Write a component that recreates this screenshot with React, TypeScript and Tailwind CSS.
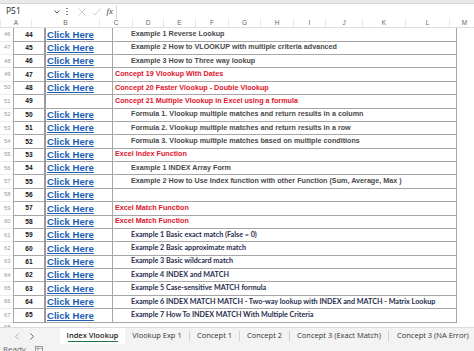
import React from "react";

type Row = { n: number; a: number; link: boolean; text: string; kind: "gray" | "red" | "navy" | "none" };

const rows: Row[] = [
  { n: 46, a: 44, link: true, text: "Example 1 Reverse Lookup", kind: "gray" },
  { n: 47, a: 45, link: true, text: "Example 2 How to VLOOKUP with multiple criteria advanced", kind: "gray" },
  { n: 48, a: 46, link: true, text: "Example 3 How to Three way lookup", kind: "gray" },
  { n: 49, a: 47, link: true, text: "Concept 19 Vlookup With Dates", kind: "red" },
  { n: 50, a: 48, link: true, text: "Concept 20 Faster Vlookup -  Double Vlookup", kind: "red" },
  { n: 51, a: 49, link: false, text: "Concept 21 Multiple Vlookup in Excel using a formula", kind: "red" },
  { n: 52, a: 50, link: true, text: "Formula 1. Vlookup multiple matches and return results in a column", kind: "gray" },
  { n: 53, a: 51, link: true, text: "Formula 2. Vlookup multiple matches and return results in a row", kind: "gray" },
  { n: 54, a: 52, link: true, text: "Formula 3. Vlookup multiple matches based on multiple conditions", kind: "gray" },
  { n: 55, a: 53, link: true, text: "Excel Index Function", kind: "red" },
  { n: 56, a: 54, link: true, text: "Example 1 INDEX Array Form", kind: "gray" },
  { n: 57, a: 55, link: true, text: "Example 2 How to Use Index function with other Function (Sum, Average, Max )", kind: "gray" },
  { n: 58, a: 56, link: true, text: "", kind: "none" },
  { n: 59, a: 57, link: true, text: "Excel Match Function", kind: "red" },
  { n: 60, a: 58, link: true, text: "Excel Match Function", kind: "red" },
  { n: 61, a: 59, link: true, text: "Example 1 Basic exact match (False = 0)", kind: "navy" },
  { n: 62, a: 60, link: true, text: "Example 2 Basic approximate match", kind: "navy" },
  { n: 63, a: 61, link: true, text: "Example 3 Basic wildcard match", kind: "navy" },
  { n: 64, a: 62, link: true, text: "Example 4 INDEX and MATCH", kind: "navy" },
  { n: 65, a: 63, link: true, text: "Example 5 Case-sensitive MATCH formula", kind: "navy" },
  { n: 66, a: 64, link: true, text: "Example 6 INDEX MATCH MATCH - Two-way lookup with INDEX and MATCH - Matrix Lookup", kind: "navy" },
  { n: 67, a: 65, link: true, text: "Example 7 How To INDEX MATCH With Multiple Criteria", kind: "navy" },
];

const cols: string[] = ["A", "B", "C", "D", "E", "F", "G", "H", "I", "J", "K", "L", "M"];

const colW: Record<string, string> = {
  A: "w-[31px]",
  B: "w-[68px]",
  C: "w-[33px]",
  D: "w-[31px]",
  E: "w-[32px]",
  F: "w-[33px]",
  G: "w-[32px]",
  H: "w-[33px]",
  I: "w-[32px]",
  J: "w-[37px]",
  K: "w-[43px]",
  L: "w-[44px]",
  M: "w-[30px]",
};

function CellText({ r }: { r: Row }) {
  if (r.kind === "red")
    return (
      <span className="pl-[2px] text-[7.2px] font-bold text-[#e0142c] whitespace-nowrap font-['Liberation_Sans',Arial,sans-serif]">
        {r.text}
      </span>
    );
  if (r.kind === "gray")
    return (
      <span className="pl-[18px] text-[7.2px] font-bold text-[#4a4a4a] whitespace-nowrap font-['Liberation_Sans',Arial,sans-serif]">
        {r.text}
      </span>
    );
  if (r.kind === "navy")
    return (
      <span className="pl-[18px] text-[7.2px] font-bold text-[#1f2d4d] whitespace-nowrap font-['Lato',sans-serif]">
        {r.text}
      </span>
    );
  return null;
}

export default function App() {
  return (
    <div className="w-[474px] h-[351px] overflow-hidden bg-white relative font-['Liberation_Sans',Arial,sans-serif]">
      {/* ribbon edge */}
      <div className="h-[4px] bg-[#e9e9e9] border-b border-[#d4d4d4]" />
      {/* formula bar */}
      <div className="h-[15px] flex items-center bg-white">
        <div className="w-[64px] flex items-center justify-between pl-[6px] pr-[4px] font-['Open_Sans',sans-serif] text-[8.5px] text-[#222]">
          <span>P51</span>
          <svg width="6" height="4" viewBox="0 0 6 4"><path d="M0.5 0.5 L3 3 L5.5 0.5" fill="none" stroke="#444" strokeWidth="0.9" /></svg>
        </div>
        <div className="flex flex-col gap-[1.5px] mx-[2px]">
          <span className="w-[1.5px] h-[1.5px] bg-[#777] rounded-full" />
          <span className="w-[1.5px] h-[1.5px] bg-[#777] rounded-full" />
          <span className="w-[1.5px] h-[1.5px] bg-[#777] rounded-full" />
        </div>
        <div className="ml-[8px] flex items-center gap-[6px]">
          <svg width="8" height="8" viewBox="0 0 8 8"><path d="M0.5 0.5 L7.5 7.5 M7.5 0.5 L0.5 7.5" stroke="#c8c8c8" strokeWidth="0.9" /></svg>
          <svg width="9" height="8" viewBox="0 0 9 8"><path d="M0.5 4.5 L3 7 L8.5 0.5" fill="none" stroke="#c8c8c8" strokeWidth="0.9" /></svg>
          <span className="italic text-[9px] text-[#444] font-['Liberation_Serif',serif]">fx</span>
        </div>
        <div className="ml-[3px] flex-1 h-[14px] border-l border-[#d8d8d8]" />
      </div>
      {/* column headers */}
      <div className="h-[9.3px] flex bg-white border-b border-[#e0e0e0]">
        <div className="w-[13px] relative">
          <svg className="absolute right-[1px] bottom-[1px]" width="5" height="5" viewBox="0 0 5 5"><path d="M5 0 L5 5 L0 5 Z" fill="#d4d4d4" /></svg>
        </div>
        {cols.map((c) => (
          <div key={c} className={`${colW[c]} shrink-0 border-l border-[#e6e6e6] flex items-center justify-center text-[6.5px] text-[#666] leading-none`}>
            {c}
          </div>
        ))}
      </div>
      {/* rows */}
      <div className="flex flex-col">
        {rows.map((r) => (
          <div key={r.n} className="h-[13.38px] flex">
            <div className="w-[13px] shrink-0 flex items-center pl-[4px] text-[6px] text-[#9a9a9a] border-b border-[#ececec]">
              {r.n}
            </div>
            <div className="w-[31px] shrink-0 border-b border-l border-[#a6a6a6] flex items-center justify-center text-[6.6px] font-bold text-[#111]">
              {r.a}
            </div>
            <div className="w-[68px] shrink-0 border-b border-l-2 border-l-[#9a9a9a] border-b-[#a6a6a6] flex items-center pl-[1px]">
              {r.link && (
                <span className="text-[9.6px] font-bold text-[#1e5fb4] underline decoration-[1px] underline-offset-[1px] leading-none whitespace-nowrap">
                  Click Here
                </span>
              )}
            </div>
            <div className="w-[345px] shrink-0 border-b border-l border-r border-[#a6a6a6] flex items-center">
              <CellText r={r} />
            </div>
            <div className="flex-1" />
          </div>
        ))}
        <div className="h-[5px] flex">
          <div className="w-[13px] pl-[4px] text-[6px] text-[#9a9a9a] leading-[8px]">68</div>
        </div>
      </div>
      {/* sheet tabs */}
      <div className="absolute left-0 top-[327px] w-[474px] h-[17px] bg-[#f3f3f3] border-t border-[#dcdcdc] flex items-stretch font-['Open_Sans',sans-serif] text-[7.5px] text-[#333]">
        <div className="w-[60px] flex items-center pl-[15px] gap-[11px]">
          <svg width="4" height="7" viewBox="0 0 4 7"><path d="M3.5 0.5 L0.5 3.5 L3.5 6.5" fill="none" stroke="#a8a8a8" strokeWidth="0.9" /></svg>
          <svg width="4" height="7" viewBox="0 0 4 7"><path d="M0.5 0.5 L3.5 3.5 L0.5 6.5" fill="none" stroke="#555" strokeWidth="0.9" /></svg>
        </div>
        <div className="w-[65px] bg-white flex items-center justify-center relative">
          <span className="font-semibold text-[#222] whitespace-nowrap">Index Vlookup</span>
          <div className="absolute bottom-[2px] left-[8px] right-[7px] h-[1.5px] bg-[#217346]" />
        </div>
        <div className="w-[65px] flex items-center justify-center border-r border-[#d0d0d0] my-[3px] whitespace-nowrap">Vlookup Exp 1</div>
        <div className="w-[50px] flex items-center justify-center border-r border-[#d0d0d0] my-[3px] whitespace-nowrap">Concept 1</div>
        <div className="w-[50px] flex items-center justify-center border-r border-[#d0d0d0] my-[3px] whitespace-nowrap">Concept 2</div>
        <div className="w-[99px] flex items-center justify-center border-r border-[#d0d0d0] my-[3px] whitespace-nowrap">Concept 3 (Exact Match)</div>
        <div className="flex-1 flex items-center pl-[8px] whitespace-nowrap">Concept 3 (NA Error)</div>
      </div>
      {/* status bar */}
      <div className="absolute left-0 top-[344px] w-[474px] h-[7px] bg-[#f3f3f3] flex items-start font-['Open_Sans',sans-serif] text-[8px] text-[#666]">
        <span className="pl-[3px] mt-[1px] leading-[8px]">Ready</span>
        <svg className="ml-[9px] mt-[2px]" width="8" height="6" viewBox="0 0 8 6"><rect x="0.5" y="0.5" width="7" height="5" fill="none" stroke="#888" strokeWidth="0.8" /><path d="M0.5 2.5 H7.5 M3 0.5 V5.5" stroke="#888" strokeWidth="0.6" /></svg>
      </div>
    </div>
  );
}
